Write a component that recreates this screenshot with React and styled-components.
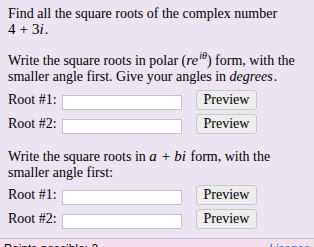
import React from 'react'
import styled, { createGlobalStyle } from 'styled-components'

const Global = createGlobalStyle`
  html, body {
    margin: 0;
    padding: 0;
    background: #ebe5f1;
  }
  body {
    font-family: "Liberation Serif", "Times New Roman", serif;
    font-size: 14px;
    color: #000;
  }
`

const Page = styled.div`
  width: 314px;
  min-height: 247px;
  overflow: hidden;
`

const Question = styled.div`
  padding: 6px 8px 0;
`

const Para = styled.p`
  margin: 0 0 ${p => p.$gap ?? 15}px;
  line-height: 16px;
`

const Math = styled.span`
  font-size: 15px;
  line-height: 0;
`

const Var = styled.i`
  font-style: italic;
  padding-right: 1px;
`

const Op = styled.span`
  padding: 0 4px;
`

const Sup = styled.sup`
  font-size: 10px;
  line-height: 0;
  font-style: italic;
  vertical-align: 6px;
`

const Rows = styled.div`
  display: flex;
  flex-direction: column;
  gap: 4px;
  margin-top: ${p => p.$top ?? 5}px;
  margin-bottom: ${p => p.$bottom ?? 15}px;
`

const Row = styled.div`
  display: flex;
  align-items: flex-end;
  height: 20px;
`

const Label = styled.span`
  width: 54px;
  line-height: 16px;
  padding-bottom: 2px;
`

const Field = styled.input`
  box-sizing: border-box;
  width: 120px;
  height: 15px;
  margin: 0 14px 0 0;
  border: 1px solid #c3c3c3;
  background: #fff;
  padding: 0;
`

const Button = styled.button`
  box-sizing: border-box;
  width: 61px;
  height: 20px;
  padding: 0;
  border: 1px solid #c9c9c9;
  border-radius: 3px;
  background: #ececec;
  font-family: "Liberation Serif", "Times New Roman", serif;
  font-size: 14px;
  color: #000;
  line-height: 16px;
`

const Footer = styled.div`
  display: flex;
  justify-content: space-between;
  border-top: 1px solid #c6b4d7;
  background: #f4e1ed;
  padding: 3px 4px;
  font-family: "Liberation Sans", Arial, sans-serif;
  font-size: 12px;
  line-height: 14px;
`

const License = styled.span`
  color: #3366cc;
  font-style: italic;
`

function AnswerRows({ top, bottom }) {
  return (
    <Rows $top={top} $bottom={bottom}>
      {['Root #1:', 'Root #2:'].map(l => (
        <Row key={l}>
          <Label>{l}</Label>
          <Field type="text" />
          <Button>Preview</Button>
        </Row>
      ))}
    </Rows>
  )
}

export default function App() {
  return (
    <Page>
      <Global />
      <Question>
        <Para>
          Find all the square roots of the complex number<br />
          <Math>4<Op>+</Op>3<Var>i</Var></Math>.
        </Para>
        <Para $gap={0}>
          Write the square roots in polar (<Math><Var>re</Var><Sup>iθ</Sup></Math>) form, with the
          smaller angle first. Give your angles in <Var>degrees</Var>.
        </Para>
        <AnswerRows top={5} bottom={15} />
        <Para $gap={0}>
          Write the square roots in <Math><Var>a</Var><Op>+</Op><Var>bi</Var></Math> form, with the
          smaller angle first:
        </Para>
        <AnswerRows top={4} bottom={9} />
      </Question>
      <Footer>
        <span>Points possible: 2</span>
        <License>License</License>
      </Footer>
    </Page>
  )
}
